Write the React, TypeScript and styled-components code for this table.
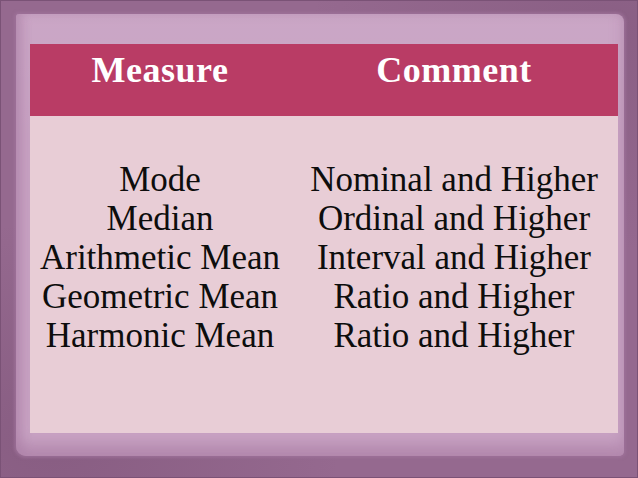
import React from 'react'
import styled, { createGlobalStyle } from 'styled-components'

const GlobalStyle = createGlobalStyle`
  html, body {
    margin: 0;
    padding: 0;
  }
  body {
    width: 638px;
    height: 478px;
    overflow: hidden;
    background: #93668f;
  }
`

const Page = styled.div`
  box-sizing: border-box;
  width: 638px;
  height: 478px;
  padding: 14px 14px 22px 16px;
  background:
    radial-gradient(ellipse at 8% 92%, rgba(105, 65, 100, 0.3), transparent 35%),
    radial-gradient(ellipse at 96% 6%, rgba(105, 65, 100, 0.25), transparent 35%),
    #95698f;
  box-shadow: inset 0 0 0 1px #7a5276;
`

const Frame = styled.div`
  box-sizing: border-box;
  height: 100%;
  padding: 30px 6px 23px 14px;
  background:
    linear-gradient(180deg, rgba(255, 255, 255, 0.05), transparent 30%),
    #c8a2c3;
  border-radius: 3px 8px 5px 10px;
  box-shadow:
    0 0 3px 2px rgba(160, 115, 155, 0.7),
    inset 0 -12px 14px rgba(165, 120, 160, 0.55),
    inset 6px 0 10px rgba(165, 120, 160, 0.35);
`

const Table = styled.div`
  height: 389px;
  display: grid;
  grid-template-columns: 260px 1fr;
  grid-template-rows: 72px 1fr;
  background: #e8cdd6;
`

const HeaderCell = styled.div`
  box-sizing: border-box;
  padding-top: 6px;
  background: #b93c65;
  color: #ffffff;
  font-family: 'Liberation Serif', 'Times New Roman', serif;
  font-weight: bold;
  font-size: 36px;
  line-height: 40px;
  letter-spacing: 0.5px;
  text-align: center;
`

const BodyCell = styled.div`
  padding-top: 44px;
  display: flex;
  flex-direction: column;
  align-items: center;
  color: #0d0d0d;
  font-family: 'Liberation Serif', 'Times New Roman', serif;
  font-size: 35px;
  line-height: 39px;
  white-space: nowrap;
`

const measures = ['Mode', 'Median', 'Arithmetic Mean', 'Geometric Mean', 'Harmonic Mean']
const comments = [
  'Nominal and Higher',
  'Ordinal and Higher',
  'Interval and Higher',
  'Ratio and Higher',
  'Ratio and Higher',
]

export default function App() {
  return (
    <>
      <GlobalStyle />
      <Page>
        <Frame>
          <Table>
            <HeaderCell>Measure</HeaderCell>
            <HeaderCell>Comment</HeaderCell>
            <BodyCell>
              {measures.map((m) => (
                <span key={m}>{m}</span>
              ))}
            </BodyCell>
            <BodyCell>
              {comments.map((c, i) => (
                <span key={i}>{c}</span>
              ))}
            </BodyCell>
          </Table>
        </Frame>
      </Page>
    </>
  )
}
